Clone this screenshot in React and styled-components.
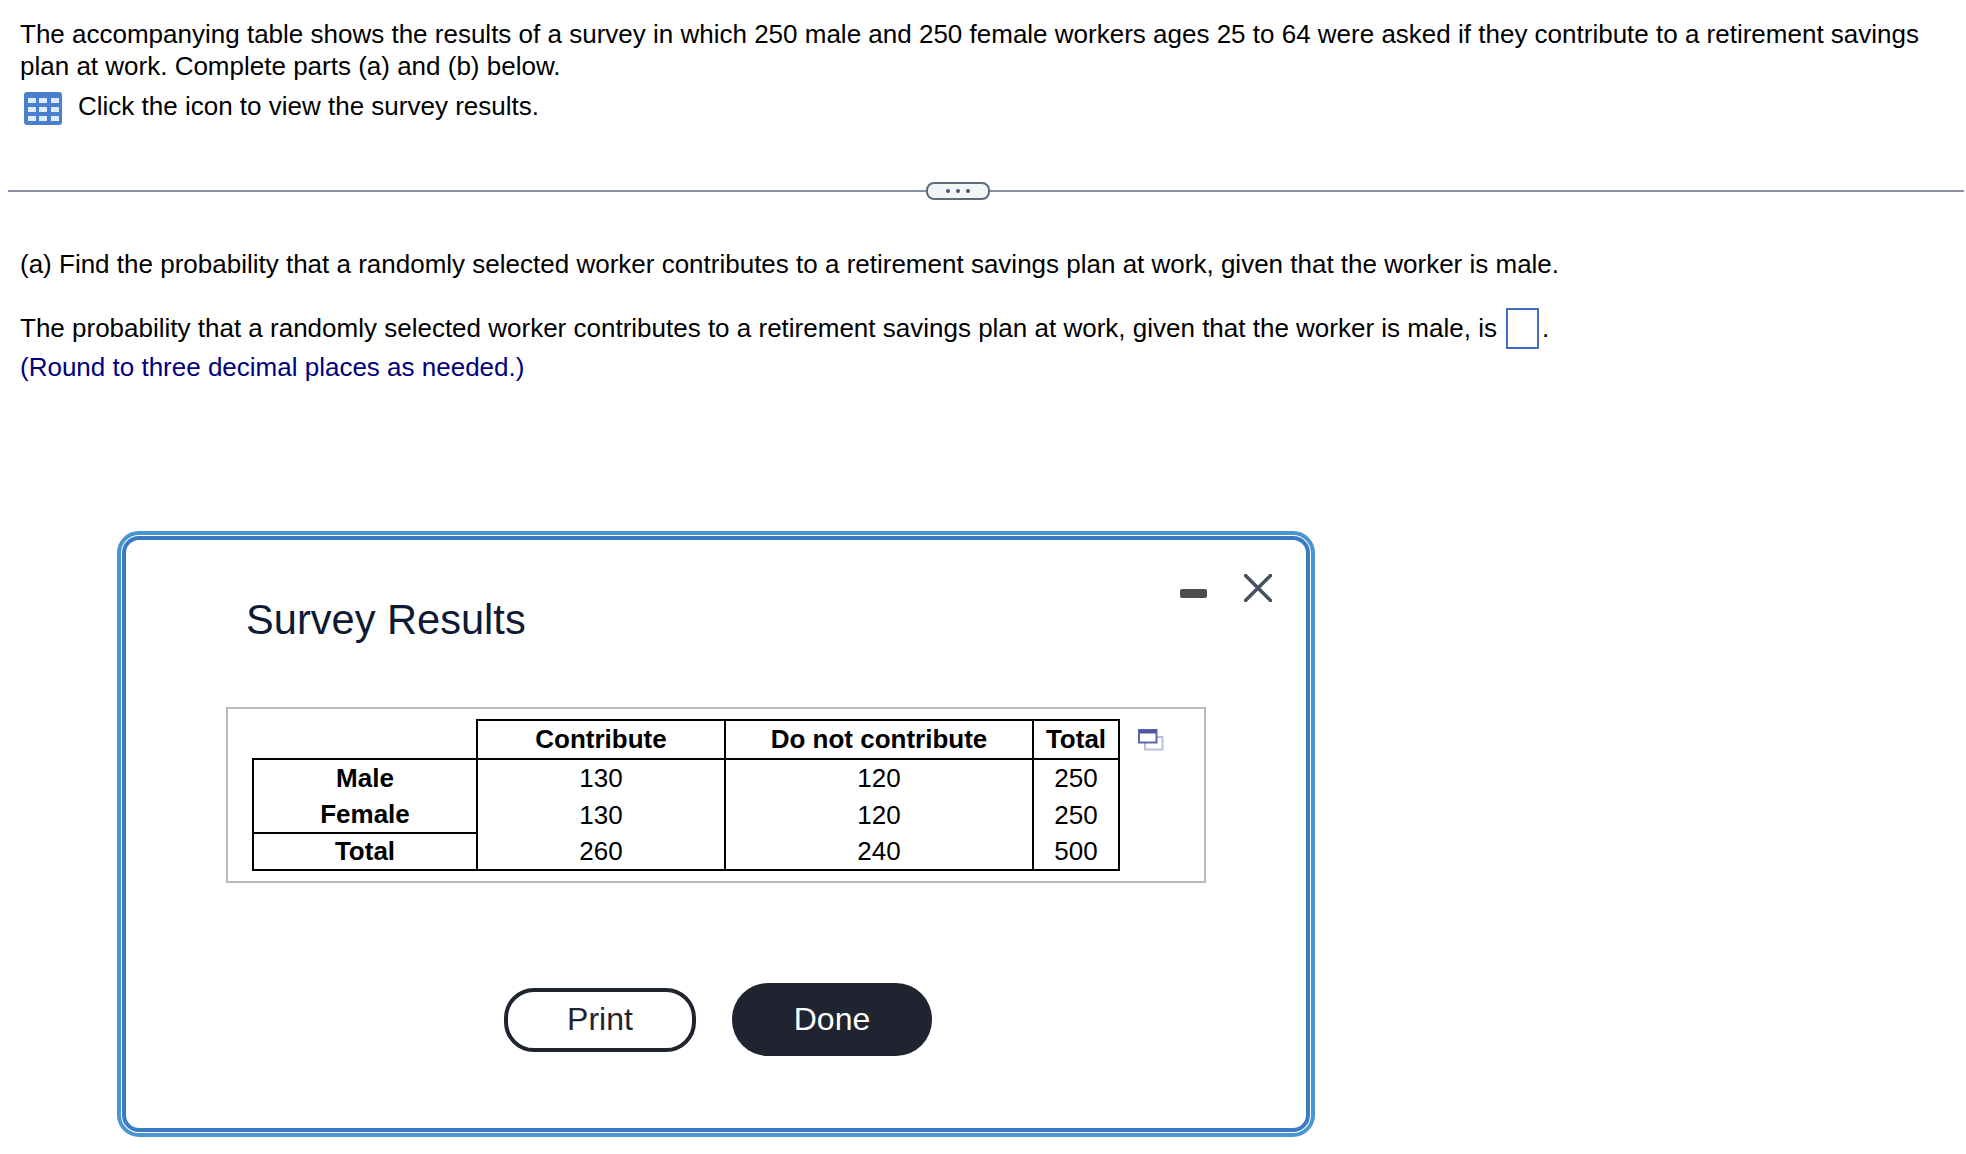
import React from "react";
import styled, { createGlobalStyle } from "styled-components";

const Global = createGlobalStyle`
  html, body { margin: 0; padding: 0; background: #fff; }
  body { font-family: "Liberation Sans", Arial, sans-serif; color: #000; }
`;

const Page = styled.div`
  width: 1966px;
  height: 1154px;
  overflow: hidden;
  background: #fff;
`;

const Intro = styled.section`
  padding: 18px 20px 0;
  height: 182px;
  box-sizing: border-box;
`;

const Paragraph = styled.p`
  margin: 0;
  font-size: 26px;
  line-height: 32px;
`;

const IconLine = styled.div`
  display: flex;
  align-items: flex-start;
  gap: 16px;
  margin-top: 8px;
  padding-left: 4px;
  font-size: 26px;
  line-height: 33px;
`;

const GridSvg = styled.svg`
  flex: none;
  margin-top: 2px;
`;

const Divider = styled.div`
  margin: 0 2px 0 8px;
  height: 18px;
  display: flex;
  align-items: center;
  justify-content: center;
  &::before, &::after {
    content: "";
    height: 2px;
    background: #8a90a4;
  }
  &::before { width: 918px; }
  &::after { flex: 1; }
`;

const Pill = styled.div`
  width: 64px;
  height: 18px;
  box-sizing: border-box;
  border: 2px solid #5f6a7d;
  border-radius: 8px;
  background: #f3f4f6;
  display: flex;
  align-items: center;
  justify-content: center;
  gap: 6px;
`;

const Dot = styled.span`
  width: 4px;
  height: 4px;
  border-radius: 50%;
  background: #4d5566;
`;

const Question = styled.section`
  padding: 0 20px;
  height: 331px;
  box-sizing: border-box;
`;

const PartLabel = styled(Paragraph)`
  padding-top: 48px;
`;

const Answer = styled.div`
  display: flex;
  align-items: center;
  margin-top: 28px;
  height: 41px;
  font-size: 26px;
`;

const InputBox = styled.span`
  width: 33px;
  height: 41px;
  box-sizing: border-box;
  border: 2px solid #3f6cc0;
  margin: 0 3px 0 9px;
`;

const Hint = styled(Paragraph)`
  margin-top: 2px;
  color: #00007f;
`;

const ModalOuter = styled.div`
  margin-left: 117px;
  width: 1198px;
  height: 606px;
  box-sizing: border-box;
  border: 4px solid #4a96d2;
  border-radius: 22px;
  padding: 1px;
  background: #fff;
`;

const ModalInner = styled.div`
  height: 100%;
  box-sizing: border-box;
  border: 4px solid #3a7bc4;
  border-radius: 17px;
  background: #fff;
`;

const ModalHeader = styled.header`
  height: 167px;
  box-sizing: border-box;
  padding: 34px 34px 0 120px;
  display: flex;
  justify-content: space-between;
  align-items: flex-start;
`;

const Title = styled.h2`
  margin: 22px 0 0;
  font-size: 41.6px;
  font-weight: 400;
  line-height: 48px;
  color: #0e1b33;
`;

const Controls = styled.div`
  display: flex;
  align-items: flex-start;
  gap: 37px;
`;

const MinimizeBar = styled.span`
  display: block;
  margin-top: 15px;
  width: 27px;
  height: 9px;
  border-radius: 2px;
  background: #4d4d4d;
`;

const TableFrame = styled.div`
  margin-left: 100px;
  width: 980px;
  height: 176px;
  box-sizing: border-box;
  border: 2px solid #bbb;
  padding: 10px 0 0 24px;
  display: flex;
  align-items: flex-start;
`;

const SurveyTable = styled.table`
  border-collapse: collapse;
  table-layout: fixed;
  width: 866px;
  font-size: 26px;
  color: #000;
`;

const Cell = styled.td`
  padding: 0;
  height: ${p => p.$h}px;
  line-height: ${p => p.$h}px;
  text-align: center;
  font-weight: ${p => (p.$bold ? 700 : 400)};
  border-left: 2px solid #000;
  border-right: 2px solid #000;
  border-top: ${p => (p.$top ? "2px solid #000" : "0")};
  border-bottom: ${p => (p.$bottom ? "2px solid #000" : "0")};
`;

const BlankCell = styled.td`
  border: 0;
  border-right: 2px solid #000;
`;

const CopyIcon = styled.svg`
  margin: 10px 0 0 18px;
  flex: none;
`;

const Actions = styled.div`
  margin-top: 100px;
  padding-left: 378px;
  display: flex;
  align-items: center;
  gap: 36px;
`;

const ActionButton = styled.button`
  font-family: "Liberation Sans", Arial, sans-serif;
  font-size: 32px;
  box-sizing: border-box;
  padding: 0;
  cursor: pointer;
  width: ${p => (p.$primary ? 200 : 192)}px;
  height: ${p => (p.$primary ? 73 : 64)}px;
  border-radius: ${p => (p.$primary ? 36 : 30)}px;
  border: ${p => (p.$primary ? "0" : "4px solid #1f2430")};
  background: ${p => (p.$primary ? "#1f2430" : "#fff")};
  color: ${p => (p.$primary ? "#fff" : "#1f2430")};
`;

const GridIcon = () => (
  <GridSvg width="38" height="33" viewBox="0 0 38 33">
    <rect width="38" height="33" rx="3" fill="#4a7fd0" />
    {[6, 15, 24].map(y =>
      [4, 15, 27].map(x => (
        <rect key={`${x}-${y}`} x={x} y={y} width="8" height="5" fill="#e0ebfa" />
      ))
    )}
  </GridSvg>
);

const rows = [
  ["Male", "130", "120", "250", 36],
  ["Female", "130", "120", "250", 36],
  ["Total", "260", "240", "500", 35],
];

export default function App() {
  return (
    <Page>
      <Global />
      <Intro>
        <Paragraph>
          The accompanying table shows the results of a survey in which 250 male and 250 female workers ages 25 to 64 were asked if they contribute to a retirement savings plan at work. Complete parts (a) and (b) below.
        </Paragraph>
        <IconLine>
          <GridIcon />
          <span>Click the icon to view the survey results.</span>
        </IconLine>
      </Intro>
      <Divider>
        <Pill>
          <Dot />
          <Dot />
          <Dot />
        </Pill>
      </Divider>
      <Question>
        <PartLabel>
          (a) Find the probability that a randomly selected worker contributes to a retirement savings plan at work, given that the worker is male.
        </PartLabel>
        <Answer>
          The probability that a randomly selected worker contributes to a retirement savings plan at work, given that the worker is male, is
          <InputBox />.
        </Answer>
        <Hint>(Round to three decimal places as needed.)</Hint>
      </Question>
      <ModalOuter>
        <ModalInner>
          <ModalHeader>
            <Title>Survey Results</Title>
            <Controls>
              <MinimizeBar />
              <svg width="28" height="28" viewBox="0 0 28 28">
                <path d="M1.5 1.5 L26.5 26.5 M26.5 1.5 L1.5 26.5" stroke="#475060" strokeWidth="3.5" strokeLinecap="round" fill="none" />
              </svg>
            </Controls>
          </ModalHeader>
          <TableFrame>
            <SurveyTable>
              <colgroup>
                <col style={{ width: 224 }} />
                <col style={{ width: 248 }} />
                <col style={{ width: 308 }} />
                <col style={{ width: 86 }} />
              </colgroup>
              <tbody>
                <tr>
                  <BlankCell />
                  <Cell $bold $top $bottom $h={37}>Contribute</Cell>
                  <Cell $bold $top $bottom $h={37}>Do not contribute</Cell>
                  <Cell $bold $top $bottom $h={37}>Total</Cell>
                </tr>
                {rows.map((r, i) => (
                  <tr key={r[0]}>
                    <Cell $bold $top={i !== 1} $bottom={i >= 1} $h={r[4]}>{r[0]}</Cell>
                    {r.slice(1, 4).map((v, j) => (
                      <Cell key={j} $bottom={i === 2} $h={r[4]}>{v}</Cell>
                    ))}
                  </tr>
                ))}
              </tbody>
            </SurveyTable>
            <CopyIcon width="26" height="22" viewBox="0 0 26 22">
              <rect x="7" y="8" width="17.5" height="12.5" fill="#fff" stroke="#b9bfdc" strokeWidth="2" />
              <rect x="1" y="1" width="17.5" height="12.5" fill="#fff" stroke="#5c67ad" strokeWidth="2" />
              <rect x="1" y="1" width="17.5" height="3.5" fill="#4c5aa3" />
            </CopyIcon>
          </TableFrame>
          <Actions>
            <ActionButton>Print</ActionButton>
            <ActionButton $primary>Done</ActionButton>
          </Actions>
        </ModalInner>
      </ModalOuter>
    </Page>
  );
}
